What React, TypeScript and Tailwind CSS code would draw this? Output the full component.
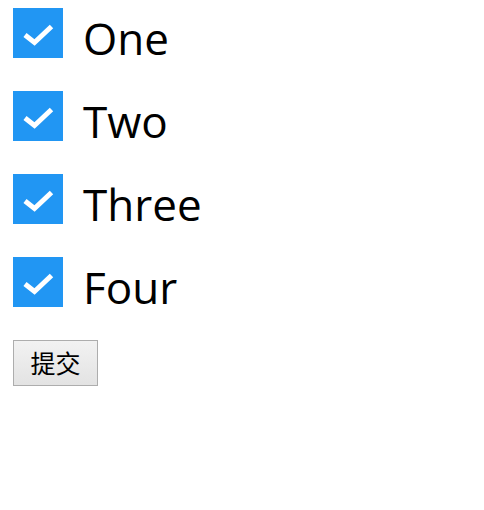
const items = ['One', 'Two', 'Three', 'Four']

function CheckBox() {
  return (
    <span className="flex h-[50px] w-[50px] shrink-0 items-center justify-center bg-[#2196f3]">
      <svg width="50" height="50" viewBox="0 0 50 50">
        <path d="M12 27 L21.5 34.5 L38.5 18.5" fill="none" stroke="#fff" strokeWidth="5" strokeLinecap="butt" strokeLinejoin="miter" />
      </svg>
    </span>
  )
}

export default function App() {
  return (
    <div className="flex flex-col items-start gap-[33px] bg-white px-[13px] pt-[8px] text-black" style={{ fontFamily: '"Open Sans", "Noto Sans CJK SC", sans-serif' }}>
      {items.map((item) => (
        <label key={item} className="flex h-[50px] items-center gap-[20px]">
          <CheckBox />
          <span className="mt-[10px] text-[44px] leading-none">{item}</span>
        </label>
      ))}
      <button className="flex h-[46px] w-[85px] items-center justify-center border border-[#adadad] bg-gradient-to-b from-[#f2f2f2] to-[#e3e3e3] text-[25px] leading-none">
        提交
      </button>
    </div>
  )
}
